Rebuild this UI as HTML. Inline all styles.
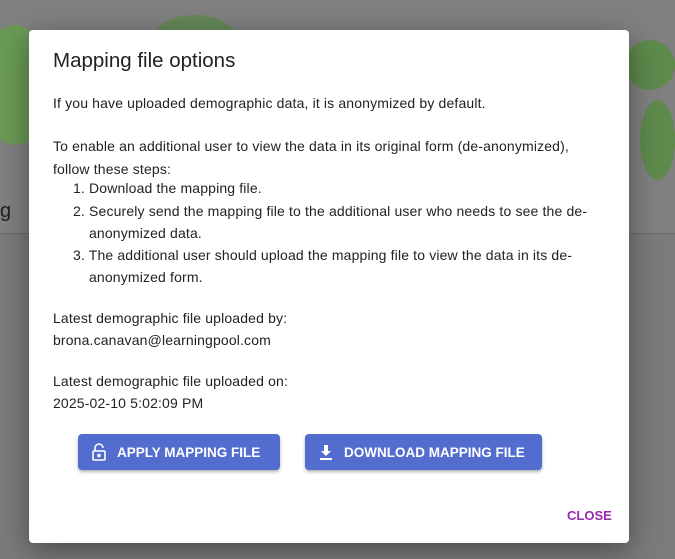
<!DOCTYPE html>
<html><head><style>
body{margin:0;width:675px;height:559px;overflow:hidden;background:#7b7b7b;font-family:"Liberation Sans",sans-serif;position:relative}
.bg{position:absolute;left:0;top:0;width:675px;height:233px;background:#808080;border-bottom:1px solid #6a6a6a}
.c{position:absolute;border-radius:50%;background:#5e8a4c}
.dlg{position:absolute;left:29px;top:30px;width:600px;height:513px;background:#fff;border-radius:4px;box-shadow:0 8px 30px rgba(0,0,0,.4)}
.t{position:absolute;left:24px;white-space:nowrap;color:#222;font-size:14px;letter-spacing:.15px}
h1{position:absolute;left:24px;top:19px;margin:0;font-size:20.5px;font-weight:normal;color:#222}
.btn{position:absolute;top:404px;height:36px;background:#536dce;border-radius:4px;color:#fff;font-weight:bold;font-size:13.5px;display:flex;align-items:center;box-shadow:0 2px 3px rgba(0,0,0,.3)}
</style></head><body>
<div class="bg">
<div class="c" style="left:-20px;top:25px;width:70px;height:120px;background:#6a9a55"></div>
<div class="c" style="left:150px;top:15px;width:90px;height:60px;opacity:.8"></div>
<div class="c" style="left:625px;top:40px;width:50px;height:50px"></div>
<div class="c" style="left:640px;top:100px;width:35px;height:80px"></div>
<div style="position:absolute;left:0;top:200px;font-size:20px;color:#222">g</div>
</div>
<div class="dlg">
<h1>Mapping file options</h1>
<div class="t" style="top:65px">If you have uploaded demographic data, it is anonymized by default.</div>
<div class="t" style="top:108px">To enable an additional user to view the data in its original form (de-anonymized),</div>
<div class="t" style="top:131px">follow these steps:</div>
<div class="t" style="left:44px;top:150px">1. Download the mapping file.</div>
<div class="t" style="left:44px;top:173px">2. Securely send the mapping file to the additional user who needs to see the de-</div>
<div class="t" style="left:60px;top:195px">anonymized data.</div>
<div class="t" style="left:44px;top:217px">3. The additional user should upload the mapping file to view the data in its de-</div>
<div class="t" style="left:60px;top:239px">anonymized form.</div>
<div class="t" style="top:280px">Latest demographic file uploaded by:</div>
<div class="t" style="top:302px">brona.canavan@learningpool.com</div>
<div class="t" style="top:343px">Latest demographic file uploaded on:</div>
<div class="t" style="top:365px">2025-02-10 5:02:09 PM</div>
<div class="btn" style="left:49px;width:202px"><svg style="margin-left:13px;margin-right:10px" width="16" height="18" viewBox="0 0 16 18" fill="none" stroke="#fff" stroke-width="1.6"><path d="M4 8V5a4 4 0 0 1 8 0"/><rect x="2" y="8" width="12" height="9" rx="1"/><circle cx="8" cy="12.5" r="1" fill="#fff"/></svg>APPLY MAPPING FILE</div>
<div class="btn" style="left:276px;width:237px"><svg style="margin-left:14px;margin-right:11px" width="14" height="16" viewBox="0 0 14 16" fill="#fff"><path d="M5 1h4v6h3l-5 5-5-5h3z"/><rect x="1" y="14" width="12" height="2"/></svg>DOWNLOAD MAPPING FILE</div>
<div style="position:absolute;left:538px;top:478px;color:#9c27b0;font-size:13px;font-weight:bold">CLOSE</div>
</div>
</body></html>
